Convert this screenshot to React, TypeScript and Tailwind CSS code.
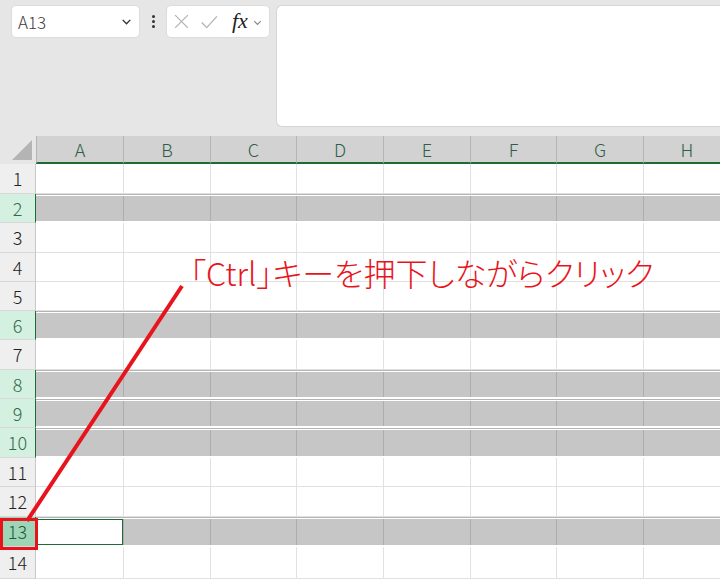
import React from "react";

const COLS = ["A", "B", "C", "D", "E", "F", "G", "H"];
const COL_W = [87, 87, 86, 87, 87, 86, 87, 87];
const ROW_H = [30, 29, 30, 29, 29, 29, 30, 29, 29, 30, 29, 30, 30, 32];
const SELECTED = new Set([2, 6, 8, 9, 10, 13]);
const ACTIVE_ROW = 13;

const font = { fontFamily: '"Noto Sans CJK JP", "Noto Sans", sans-serif' };

function Chevron({ className }: { className?: string }) {
  return (
    <svg viewBox="0 0 12 12" className={className} fill="none" stroke="currentColor" strokeWidth="1.3">
      <path d="M2.5 4.5 L6 8 L9.5 4.5" />
    </svg>
  );
}

function Toolbar() {
  return (
    <div className="h-[136px] bg-[#e6e6e6] flex items-start pt-[5px] pl-[11px]">
      <div className="w-[129px] h-[33px] bg-white rounded-[5px] border border-[#dcdcdc] flex items-center justify-between pl-[6px] pr-[6px]">
        <span className="text-[17px] font-light text-[#3a3a3a]">A13</span>
        <Chevron className="w-[13px] h-[13px] text-[#333]" />
      </div>
      <div className="w-[26px] h-[33px] flex flex-col items-center justify-center gap-[2px]">
        <span className="w-[3px] h-[3px] rounded-full bg-[#333]" />
        <span className="w-[3px] h-[3px] rounded-full bg-[#333]" />
        <span className="w-[3px] h-[3px] rounded-full bg-[#333]" />
      </div>
      <div className="w-[104px] h-[33px] bg-white rounded-[5px] border border-[#dcdcdc] flex items-center pl-[6px]">
        <svg viewBox="0 0 16 16" className="w-[17px] h-[17px]" fill="none" stroke="#b3b3b3" strokeWidth="1.2">
          <path d="M2 2 L14 14 M14 2 L2 14" />
        </svg>
        <svg viewBox="0 0 16 16" className="w-[18px] h-[18px] ml-[10px]" fill="none" stroke="#b3b3b3" strokeWidth="1.2">
          <path d="M1.5 8.5 L6 13 L15 3" />
        </svg>
        <span
          className="ml-[14px] text-[22px] italic text-[#222] leading-none -mt-[2px]"
          style={{ fontFamily: '"Liberation Serif", "DejaVu Serif", serif' }}
        >
          fx
        </span>
        <Chevron className="w-[11px] h-[11px] text-[#8a8a8a] ml-[4px] mt-[2px]" />
      </div>
      <div className="ml-[6px] flex-1 h-[122px] bg-white rounded-l-[6px] border border-[#d6d6d6] border-r-0" />
    </div>
  );
}

function HeaderRow() {
  return (
    <div className="flex h-[28px]">
      <div className="w-[36px] shrink-0 bg-[#e6e6e6] relative border-b-2 border-[#e6e6e6]">
        <svg viewBox="0 0 36 28" className="absolute inset-0 w-[36px] h-[28px]">
          <polygon points="32,4 32,24 12,24" fill="#b4b4b4" />
        </svg>
      </div>
      {COLS.map((c, i) => (
        <div
          key={c}
          style={{ width: COL_W[i] }}
          className="shrink-0 bg-[#d2d2d2] border-l border-[#b5b5b5] border-b-2 border-b-[#1e6b35] flex items-center justify-center text-[18px] font-light text-[#2f5e48]"
        >
          {c}
        </div>
      ))}
    </div>
  );
}

function Row({ n, h }: { n: number; h: number }) {
  const sel = SELECTED.has(n);
  const active = n === ACTIVE_ROW;
  const headCls = active
    ? "bg-[#9fd5b7] text-[#1e5a38] border-r border-[#1e6b35]"
    : sel
    ? "bg-[#d3f0e0] text-[#2f6b4a] border-r border-[#1e6b35]"
    : "bg-[#efefef] text-[#222] border-r border-[#c8c8c8]";
  return (
    <div className="flex" style={{ height: h }}>
      <div className={`w-[36px] shrink-0 flex items-center justify-center text-[18px] font-light border-b border-b-[#d8d8d8] ${headCls}`}>
        {n}
      </div>
      {COLS.map((c, i) => {
        if (sel) {
          const isActiveCell = active && i === 0;
          return (
            <div
              key={c}
              style={{ width: COL_W[i] }}
              className="shrink-0 border-t border-[#b4b4b4] bg-white pt-[1px] pb-[2px]"
            >
              {isActiveCell ? (
                <div className="h-full bg-white border border-[#1e6b35]" />
              ) : (
                <div className={`h-full bg-[#c6c6c6] ${i === 0 ? "" : "border-l border-[#adadad]"}`} />
              )}
            </div>
          );
        }
        return (
          <div
            key={c}
            style={{ width: COL_W[i] }}
            className={`shrink-0 bg-white border-b border-[#e1e1e1] ${i === 0 ? "" : "border-l border-l-[#e1e1e1]"}`}
          />
        );
      })}
    </div>
  );
}

export default function App() {
  return (
    <div className="w-[720px] h-[580px] overflow-hidden bg-white relative" style={font}>
      <Toolbar />
      <HeaderRow />
      {ROW_H.map((h, i) => (
        <Row key={i} n={i + 1} h={h} />
      ))}

      {/* callout pointing at the clicked row header */}
      <svg className="absolute left-0 top-0 pointer-events-none" width="720" height="580">
        <line x1="182" y1="286" x2="27" y2="521" stroke="#e8141c" strokeWidth="4" />
      </svg>
      <div className="absolute left-0 top-[518px] w-[38px] h-[32px] border-[3px] border-[#e8141c]" />
      <div
        className="absolute left-[190px] top-[251px] text-[32px] leading-[42px] font-light text-[#e8141c] whitespace-nowrap"
        style={{ fontFeatureSettings: '"palt"' }}
      >
        「Ctrl」キーを押下しながらクリック
      </div>
    </div>
  );
}
